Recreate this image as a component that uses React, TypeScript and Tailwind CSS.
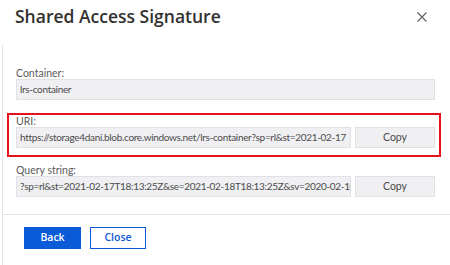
const font = { fontFamily: '"Open Sans", "Noto Sans", sans-serif' };
const fieldFont = { fontFamily: 'Lato, "Open Sans", sans-serif' };

function Field({ label, value, copy }: { label: string; value: string; copy?: boolean }) {
  return (
    <div className="flex flex-col" style={fieldFont}>
      <div className="text-[10.5px] leading-[12px] text-[#5a5a5a]">{label}</div>
      <div className="flex gap-[4px]">
        <div className="flex-1 min-w-0 h-[21px] bg-[#f0f0f3] border border-[#e0e0e6] px-[3px] text-[10px] tracking-[-0.32px] leading-[19px] text-[#4a4a4a] overflow-hidden whitespace-nowrap">
          {value}
        </div>
        {copy && (
          <button className="shrink-0 w-[80px] h-[21px] bg-[#f0f0f3] border border-[#e0e0e6] text-[10.5px] text-[#4a4a4a]">
            Copy
          </button>
        )}
      </div>
    </div>
  );
}

export default function App() {
  return (
    <div className="w-[450px] h-[265px] bg-white overflow-hidden" style={font}>
      {/* Header */}
      <div className="flex items-center justify-between pl-[15px] pr-[23px] pt-[2px] h-[30px]">
        <h1 className="text-[17.5px] font-semibold text-[#323130]">Shared Access Signature</h1>
        <svg width="10" height="10" viewBox="0 0 10 10" className="mt-[1px]">
          <path d="M0.5 0.5 L9.5 9.5 M9.5 0.5 L0.5 9.5" stroke="#605e5c" strokeWidth="1.1" fill="none" />
        </svg>
      </div>

      <div className="flex mt-[15px]">
        <div className="w-[1px] ml-[2px] bg-[#e3e3ee] h-[220px]" />
        <div className="flex-1 min-w-0">
          <div className="flex flex-col pt-[22px] pl-[13px] pr-[15px]">
            <Field label="Container:" value="lrs-container" />

            {/* Highlighted URI field */}
            <div className="mt-[13px] -ml-[9px] -mr-[6px] border-2 border-[#e8101c] pb-[7px] pl-[7px] pr-[4px]">
              <Field
                label="URI:"
                value="https://storage4dani.blob.core.windows.net/lrs-container?sp=rl&st=2021-02-17"
                copy
              />
            </div>

            <div className="mt-[7px]">
              <Field
                label="Query string:"
                value="?sp=rl&st=2021-02-17T18:13:25Z&se=2021-02-18T18:13:25Z&sv=2020-02-10&"
                copy
              />
            </div>
          </div>

          <div className="mt-[17px] h-[1px] bg-[#e3e3ea]" />

          <div className="flex gap-[9px] pl-[21px] pt-[12px]">
            <button className="w-[57px] h-[22px] bg-[#0b5ad8] text-white text-[10.5px] font-semibold">Back</button>
            <button className="w-[56px] h-[22px] border border-[#0b5ad8] text-[#0b5ad8] text-[10.5px] font-semibold">Close</button>
          </div>
        </div>
      </div>
    </div>
  );
}
